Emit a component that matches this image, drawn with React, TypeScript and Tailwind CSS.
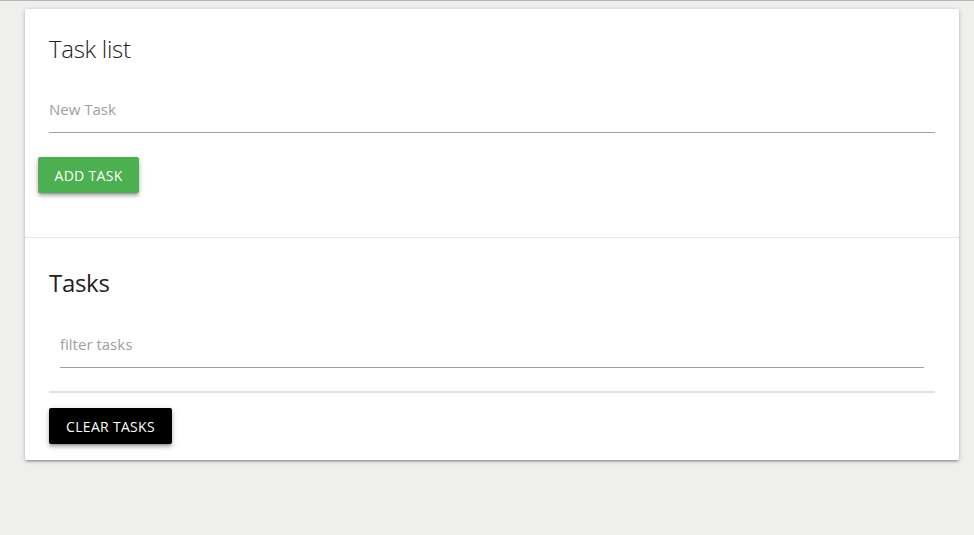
import React from "react";

export default function App() {
  return (
    <div
      className="min-h-[535px] w-full bg-[#eff0ee] border-t border-[#b4b4b4] pt-[8px]"
      style={{ fontFamily: '"Open Sans", "Noto Sans", sans-serif' }}
    >
      <div className="ml-[25px] mr-[15px] bg-white rounded-[2px] shadow-[0_2px_2px_0_rgba(0,0,0,0.14),0_3px_1px_-2px_rgba(0,0,0,0.12),0_1px_5px_0_rgba(0,0,0,0.2)]">
        <div className="px-[24px] pt-[24px] pb-[44px] border-b border-[#e6e6e6] flex flex-col">
          <div className="h-[32px] leading-[32px] text-[24px] font-light text-[#212121] tracking-[-0.3px]">
            Task list
          </div>
          <input
            placeholder="New Task"
            className="mt-[20px] h-[48px] w-full bg-transparent border-b border-[#9e9e9e] outline-none text-[15px] text-[#212121] placeholder:text-[#9e9e9e]"
          />
          <div className="mt-[24px]">
            <button className="ml-[-11px] h-[36px] w-[101px] rounded-[2px] bg-[#4caf50] text-white text-[14px] uppercase tracking-[0.3px] shadow-[0_3px_3px_0_rgba(0,0,0,0.16),0_3px_1px_-2px_rgba(0,0,0,0.12),0_2px_6px_0_rgba(0,0,0,0.22)]">
              Add Task
            </button>
          </div>
        </div>
        <div className="px-[24px] pt-[29px] pb-[16px] flex flex-col">
          <div className="h-[32px] leading-[32px] text-[24px] font-normal text-[#212121] tracking-[-0.3px]">
            Tasks
          </div>
          <div className="mx-[11px] mt-[21px]">
            <input
              placeholder="filter tasks"
              className="h-[48px] w-full bg-transparent border-b border-[#9e9e9e] outline-none text-[15px] text-[#212121] placeholder:text-[#9e9e9e]"
            />
          </div>
          <div className="mt-[23px] h-[2px] bg-[#e0e0e0]" />
          <div className="mt-[15px]">
            <button className="h-[36px] w-[123px] rounded-[2px] bg-black text-white text-[14px] uppercase tracking-[0.3px] shadow-[0_3px_3px_0_rgba(0,0,0,0.16),0_3px_1px_-2px_rgba(0,0,0,0.12),0_2px_6px_0_rgba(0,0,0,0.22)]">
              Clear Tasks
            </button>
          </div>
        </div>
      </div>
    </div>
  );
}
